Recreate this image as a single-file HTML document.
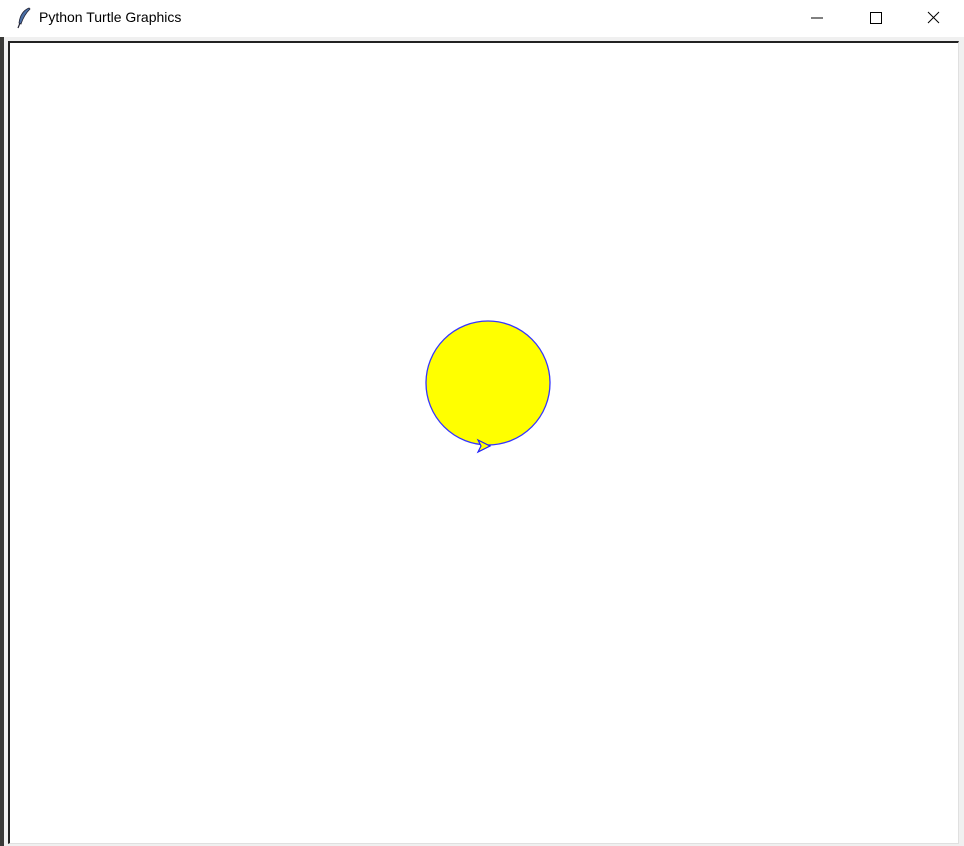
<!DOCTYPE html>
<html><head><meta charset="utf-8"><style>
html,body{margin:0;padding:0;width:964px;height:846px;overflow:hidden;background:#f0f0f0;font-family:"Segoe UI","Liberation Sans",sans-serif}
#title{position:absolute;left:0;top:0;width:964px;height:37px;background:#fff}
#title span{position:absolute;left:39px;top:9px;font-size:14px;color:#000}
#dark{position:absolute;left:0;top:37px;width:4px;height:809px;background:#3a3a38}
#canvas{position:absolute;left:8px;top:41px;width:948px;height:800px;background:#fff;border-left:2px solid #222;border-top:2px solid #222;border-right:1px solid #e0e0e0;border-bottom:1px solid #e0e0e0}
svg{position:absolute}
</style></head><body>
<div id="title">
<svg style="left:16px;top:7px" width="16" height="22" viewBox="0 0 16 22"><path d="M13 1C8 3 4 8 3 16L5 17C7 11 10 6 14 2Z" fill="#4a6fa5" stroke="#223" stroke-width="0.8"/><path d="M4 16L2 21" stroke="#223" stroke-width="1.2"/></svg>
<span>Python Turtle Graphics</span>
<svg style="left:810px;top:10px" width="140" height="18"><path d="M1 8H13" stroke="#000" stroke-width="1"/><rect x="60.5" y="2.5" width="11" height="11" fill="none" stroke="#000"/><path d="M118 2L129 13M129 2L118 13" stroke="#000" stroke-width="1"/></svg>
</div>
<div id="dark"></div>
<div id="canvas"></div>
<svg style="left:0;top:0" width="964" height="846">
<circle cx="488" cy="383" r="62" fill="#ff0" stroke="#3535ff" stroke-width="1.3"/>
<path d="M478 440L490 446L478 452L481 446Z" fill="#ff0" stroke="#2020ff" stroke-width="1.2"/>
</svg>
</body></html>
